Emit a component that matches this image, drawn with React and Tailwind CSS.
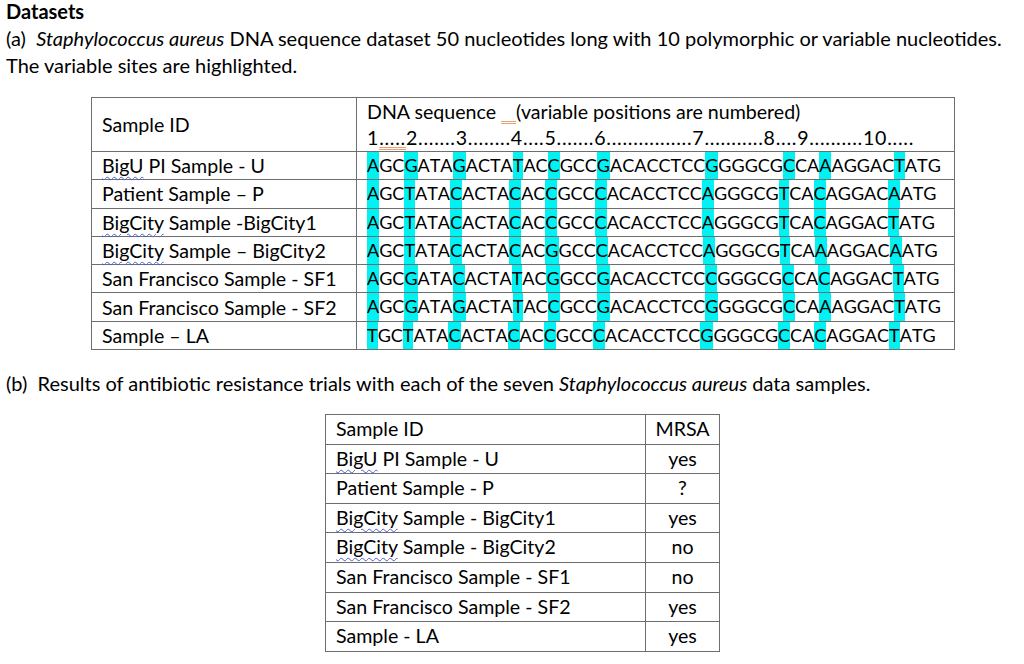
import React from 'react';

const HIGHLIGHT = [1, 4, 8, 13, 16, 20, 29, 35, 38, 44];

const sequences = [
  { id: 'BigU PI Sample - U', squiggle: 'BigU', seq: 'AGCGATAGACTATACCGCCGACACCTCCGGGGCGCCAAAGGACTATG' },
  { id: 'Patient Sample \u2013 P', seq: 'AGCTATACACTACACCGCCCACACCTCCAGGGCGTCACAGGACAATG' },
  { id: 'BigCity Sample -BigCity1', squiggle: 'BigCity', seq: 'AGCTATACACTACACCGCCCACACCTCCAGGGCGTCACAGGACTATG' },
  { id: 'BigCity Sample \u2013 BigCity2', squiggle: 'BigCity', seq: 'AGCTATACACTACACGGCCCACACCTCCAGGGCGTCAAAGGACAATG' },
  { id: 'San Francisco Sample - SF1', seq: 'AGCGATACACTATACGGCCGACACCTCCCGGGCGCCACAGGACTATG' },
  { id: 'San Francisco Sample - SF2', seq: 'AGCGATAGACTATACCGCCGACACCTCCGGGGCGCCAAAGGACTATG' },
  { id: 'Sample \u2013 LA', seq: 'TGCTATACACTACACCGCCCACACCTCCGGGGCGCCACAGGACTATG' },
];

const results = [
  { id: 'BigU PI Sample - U', squiggle: 'BigU', mrsa: 'yes' },
  { id: 'Patient Sample - P', mrsa: '?' },
  { id: 'BigCity Sample - BigCity1', squiggle: 'BigCity', mrsa: 'yes' },
  { id: 'BigCity Sample - BigCity2', squiggle: 'BigCity', mrsa: 'no' },
  { id: 'San Francisco Sample - SF1', mrsa: 'no' },
  { id: 'San Francisco Sample - SF2', mrsa: 'yes' },
  { id: 'Sample - LA', mrsa: 'yes' },
];

// Word-style spelling squiggle under the first word
const SampleName = ({ id, squiggle }) => {
  if (!squiggle) return <span>{id}</span>;
  return (
    <span>
      <span className="underline decoration-wavy decoration-[#4a5fd0] decoration-1 underline-offset-[3px]">{squiggle}</span>
      {id.slice(squiggle.length)}
    </span>
  );
};

const Sequence = ({ seq }) => (
  <div className="flex h-[27.3px] whitespace-nowrap text-[18px] leading-[27.3px]">
    {seq.split('').map((ch, i) => (
      <span key={i} className={HIGHLIGHT.includes(i + 1) ? 'bg-[#00f2f2]' : ''}>
        {ch}
      </span>
    ))}
  </div>
);

const App = () => {
  return (
    <div className="w-[1024px] h-[664px] bg-white text-black pl-[6px] text-[19.6px] font-['Lato','Open_Sans',sans-serif] overflow-hidden">
      <div className="leading-[27px] -mt-[2px] text-[20px]">
        <p className="font-bold">Datasets</p>
        <p>
          (a)&nbsp; <i>Staphylococcus aureus</i> DNA sequence dataset 50 nucleotides long with 10 polymorphic or variable nucleotides.
        </p>
        <p>The variable sites are highlighted.</p>
      </div>

      {/* tabulka sekvenci */}
      <table className="ml-[85px] mt-[18px] border-collapse w-[864px] table-fixed leading-[27px]">
        <colgroup>
          <col className="w-[265px]" />
          <col />
        </colgroup>
        <thead>
          <tr>
            <td className="border border-[#6e6e6e] px-[10px] py-0 h-[54px] align-middle font-normal">Sample ID</td>
            <td className="border border-[#6e6e6e] px-[10px] py-0 h-[54px] leading-[26px]">
              <div className="whitespace-nowrap">
                DNA sequence{' '}
                <span className="underline decoration-double decoration-[#e8a070] underline-offset-[2px]">&nbsp;&nbsp;&nbsp;</span>
                (variable positions are numbered)
              </div>
              <div className="whitespace-nowrap tracking-[0.75px]">
                1<span className="underline decoration-double decoration-[#e8a070] underline-offset-[2px]">.....</span>2.......3........4....5.......6................7...........8....9..........10.....
              </div>
            </td>
          </tr>
        </thead>
        <tbody>
          {sequences.map((row, index) => (
            <tr key={index}>
              <td className="border border-[#6e6e6e] px-[10px] py-0 whitespace-nowrap">
                <SampleName id={row.id} squiggle={row.squiggle} />
              </td>
              <td className="border border-[#6e6e6e] px-[10px] py-0">
                <Sequence seq={row.seq} />
              </td>
            </tr>
          ))}
        </tbody>
      </table>

      <p className="mt-[20px] leading-[27px] text-[20px]">
        (b)&nbsp; Results of antibiotic resistance trials with each of the seven <i>Staphylococcus aureus</i> data samples.
      </p>

      {/* tabulka vysledku */}
      <table className="ml-[319px] mt-[17px] border-collapse w-[395px] table-fixed leading-[28.6px]">
        <colgroup>
          <col className="w-[320px]" />
          <col />
        </colgroup>
        <tbody>
          <tr>
            <td className="border border-[#6e6e6e] px-[10px] py-0">Sample ID</td>
            <td className="border border-[#6e6e6e] text-center py-0">MRSA</td>
          </tr>
          {results.map((row, index) => (
            <tr key={index}>
              <td className="border border-[#6e6e6e] px-[10px] py-0 whitespace-nowrap">
                <SampleName id={row.id} squiggle={row.squiggle} />
              </td>
              <td className="border border-[#6e6e6e] text-center py-0">{row.mrsa}</td>
            </tr>
          ))}
        </tbody>
      </table>
    </div>
  );
};

export default App;
